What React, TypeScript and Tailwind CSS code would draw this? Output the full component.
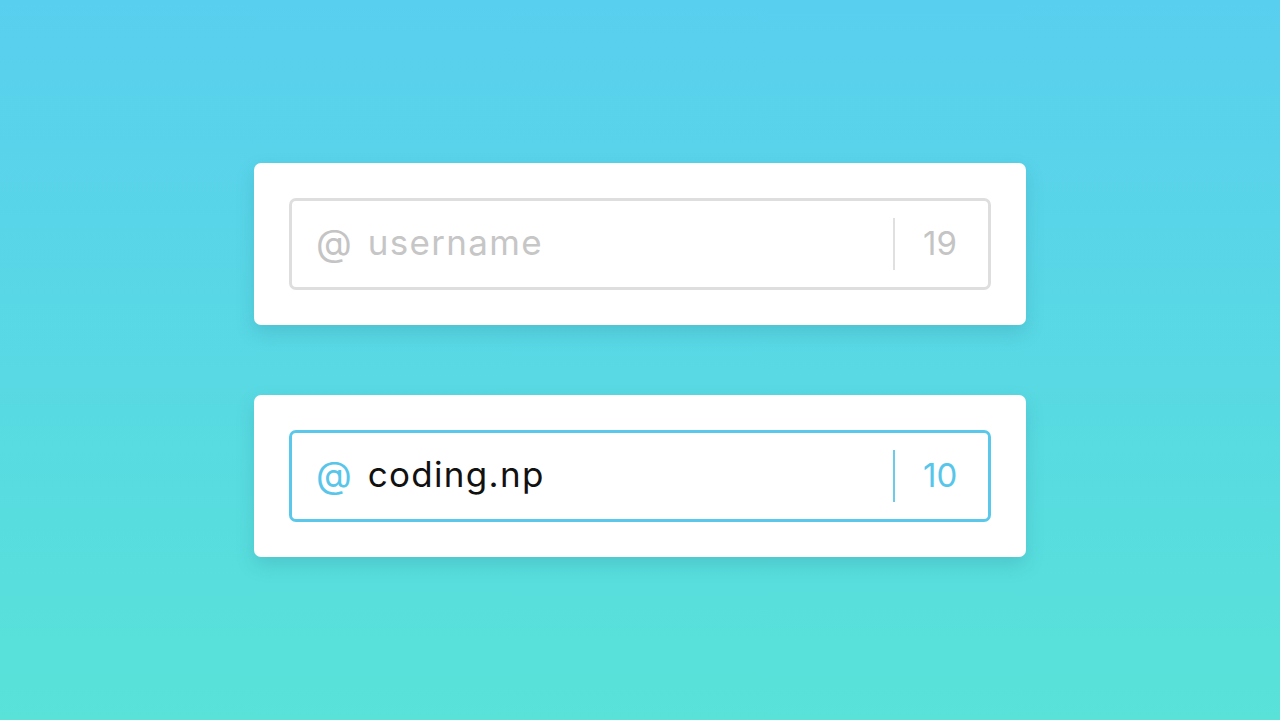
import React from "react";

function Field({ value, count, active }: { value: string; count: number; active?: boolean }) {
  return (
    <div className="w-[772px] rounded-[7px] bg-white p-[35px] shadow-[0_8px_18px_rgba(40,120,140,0.22)]">
      <div
        className={`flex h-[92px] items-center rounded-[7px] border-[3px] ${
          active ? "border-[#5ac8ea]" : "border-[#dedede]"
        }`}
      >
        <span
          className={`mb-[3px] ml-[24px] text-[37px] leading-none ${active ? "text-[#58c6ea]" : "text-[#c4c4c4]"}`}
        >
          @
        </span>
        <input
          readOnly
          value={value}
          placeholder="username"
          className="mb-[3px] ml-[16px] min-w-0 flex-1 bg-transparent text-[35px] tracking-[1.3px] text-[#111111] outline-none placeholder:text-[#c6c6c6]"
        />
        <div className={`h-[52px] w-[2px] ${active ? "bg-[#6ccbe9]" : "bg-[#e0e0e0]"}`} />
        <span
          className={`mb-[2px] w-[93px] pl-[28px] text-[33px] leading-none ${active ? "text-[#58c6ea]" : "text-[#c4c4c4]"}`}
        >
          {count}
        </span>
      </div>
    </div>
  );
}

export default function App() {
  return (
    <div
      className="flex h-[720px] w-full flex-col items-center justify-center gap-[70px] bg-gradient-to-b from-[#59cfef] to-[#58e2d8]"
      style={{ fontFamily: "Inter, 'Open Sans', sans-serif" }}
    >
      <Field value="" count={19} />
      <Field value="coding.np" count={10} active />
    </div>
  );
}
